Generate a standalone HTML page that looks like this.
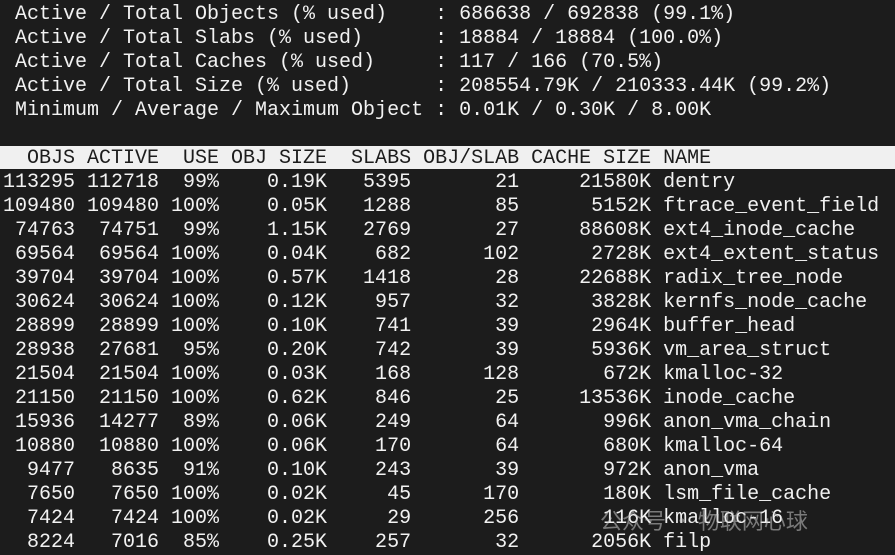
<!DOCTYPE html>
<html><head><meta charset="utf-8"><style>
html,body{margin:0;padding:0;background:#1c1c1c;width:895px;height:552px;overflow:hidden}
pre{margin:0;position:absolute;left:3px;top:3px;font-family:"Liberation Mono",monospace;font-size:20px;line-height:24px;color:#f2f2f2;white-space:pre;letter-spacing:0}
.hd{position:absolute;left:0;top:146px;width:895px;height:23px;background:#f0f0f0}
.h{color:#1c1c1c}
.wm{position:absolute;left:600px;top:504px;font-family:"Noto Sans CJK SC",sans-serif;font-size:22px;color:rgba(200,200,200,0.55);white-space:nowrap}
</style></head><body>
<div class="hd"></div>
<pre> Active / Total Objects (% used)    : 686638 / 692838 (99.1%)
 Active / Total Slabs (% used)      : 18884 / 18884 (100.0%)
 Active / Total Caches (% used)     : 117 / 166 (70.5%)
 Active / Total Size (% used)       : 208554.79K / 210333.44K (99.2%)
 Minimum / Average / Maximum Object : 0.01K / 0.30K / 8.00K

<span class="h">  OBJS ACTIVE  USE OBJ SIZE  SLABS OBJ/SLAB CACHE SIZE NAME</span>
113295 112718  99%    0.19K   5395       21     21580K dentry
109480 109480 100%    0.05K   1288       85      5152K ftrace_event_field
 74763  74751  99%    1.15K   2769       27     88608K ext4_inode_cache
 69564  69564 100%    0.04K    682      102      2728K ext4_extent_status
 39704  39704 100%    0.57K   1418       28     22688K radix_tree_node
 30624  30624 100%    0.12K    957       32      3828K kernfs_node_cache
 28899  28899 100%    0.10K    741       39      2964K buffer_head
 28938  27681  95%    0.20K    742       39      5936K vm_area_struct
 21504  21504 100%    0.03K    168      128       672K kmalloc-32
 21150  21150 100%    0.62K    846       25     13536K inode_cache
 15936  14277  89%    0.06K    249       64       996K anon_vma_chain
 10880  10880 100%    0.06K    170       64       680K kmalloc-64
  9477   8635  91%    0.10K    243       39       972K anon_vma
  7650   7650 100%    0.02K     45      170       180K lsm_file_cache
  7424   7424 100%    0.02K     29      256       116K kmalloc-16
  8224   7016  85%    0.25K    257       32      2056K filp</pre>
<div class="wm">公众号 · 物联网心球</div>
</body></html>
